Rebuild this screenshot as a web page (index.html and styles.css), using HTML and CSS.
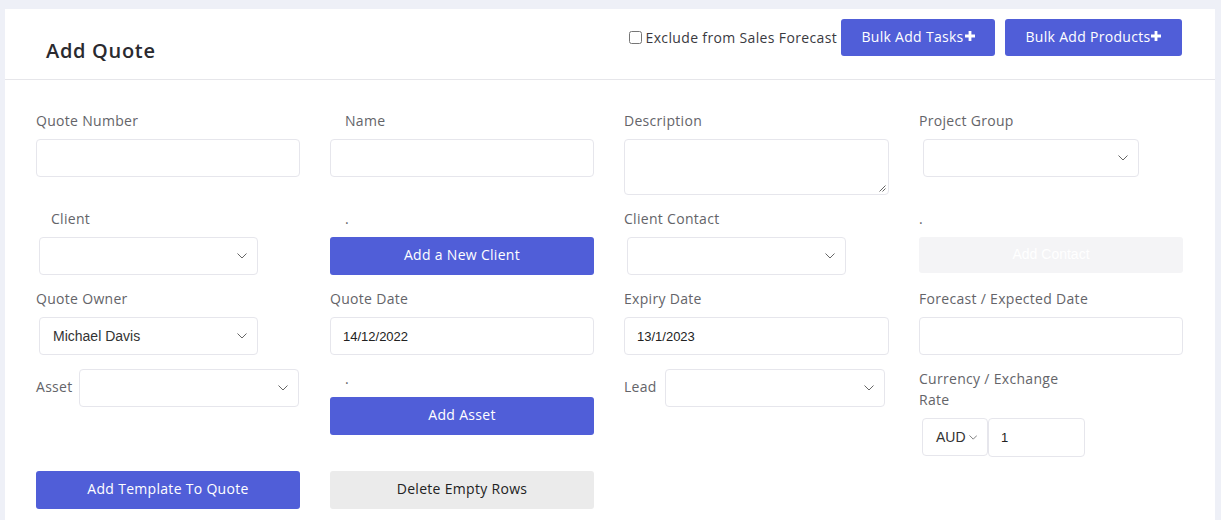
FILE: index.html
```html
<!DOCTYPE html>
<html lang="en">
<head>
<meta charset="utf-8">
<title>Add Quote</title>
<link rel="stylesheet" href="styles.css">
</head>
<body>
<div class="card">
  <div class="card-header">
    <h1 class="title">Add Quote</h1>
    <div class="header-actions">
      <label class="check"><input type="checkbox" class="checkbox">Exclude from Sales Forecast</label>
      <button class="btn btn-primary btn-bulk">Bulk Add Tasks<svg class="plus" viewBox="0 0 10 10" width="10" height="10"><path d="M3.6 0h2.8v3.6H10v2.8H6.4V10H3.6V6.4H0V3.6h3.6z" fill="#fff"/></svg></button>
      <button class="btn btn-primary btn-bulk">Bulk Add Products<svg class="plus" viewBox="0 0 10 10" width="10" height="10"><path d="M3.6 0h2.8v3.6H10v2.8H6.4V10H3.6V6.4H0V3.6h3.6z" fill="#fff"/></svg></button>
    </div>
  </div>
  <div class="card-body">
    <div class="form-grid">
      <!-- row 1 -->
      <div class="field">
        <div class="lbl">Quote Number</div>
        <div class="ctl input"></div>
      </div>
      <div class="field">
        <div class="lbl indent">Name</div>
        <div class="ctl input"></div>
      </div>
      <div class="field">
        <div class="lbl">Description</div>
        <div class="ctl textarea"><svg class="grip" viewBox="0 0 8 8" width="8" height="8"><path d="M7.5 1.5 1.5 7.5M7.5 4.5 4.5 7.5" stroke="#666" stroke-width="1"/></svg></div>
      </div>
      <div class="field">
        <div class="lbl">Project Group</div>
        <div class="ctl select sel-pg"><span></span><svg class="chev" viewBox="0 0 10 6" width="10" height="6"><path d="M.5.5 5 5 9.5.5" fill="none" stroke="#666" stroke-width="1"/></svg></div>
      </div>
      <!-- row 2 -->
      <div class="field">
        <div class="lbl indent">Client</div>
        <div class="ctl select sel-sm"><span></span><svg class="chev" viewBox="0 0 10 6" width="10" height="6"><path d="M.5.5 5 5 9.5.5" fill="none" stroke="#666" stroke-width="1"/></svg></div>
      </div>
      <div class="field">
        <div class="lbl indent">.</div>
        <button class="btn btn-primary btn-block">Add a New Client</button>
      </div>
      <div class="field">
        <div class="lbl">Client Contact</div>
        <div class="ctl select sel-sm"><span></span><svg class="chev" viewBox="0 0 10 6" width="10" height="6"><path d="M.5.5 5 5 9.5.5" fill="none" stroke="#666" stroke-width="1"/></svg></div>
      </div>
      <div class="field">
        <div class="lbl">.</div>
        <button class="btn btn-disabled btn-block">Add Contact</button>
      </div>
      <!-- row 3 -->
      <div class="field">
        <div class="lbl">Quote Owner</div>
        <div class="ctl select sel-sm"><span>Michael Davis</span><svg class="chev" viewBox="0 0 10 6" width="10" height="6"><path d="M.5.5 5 5 9.5.5" fill="none" stroke="#666" stroke-width="1"/></svg></div>
      </div>
      <div class="field">
        <div class="lbl">Quote Date</div>
        <div class="ctl input"><span class="val">14/12/2022</span></div>
      </div>
      <div class="field">
        <div class="lbl">Expiry Date</div>
        <div class="ctl input"><span class="val">13/1/2023</span></div>
      </div>
      <div class="field">
        <div class="lbl">Forecast / Expected Date</div>
        <div class="ctl input"></div>
      </div>
      <!-- row 4 -->
      <div class="field inline">
        <div class="lbl">Asset</div>
        <div class="ctl select sel-inline"><span></span><svg class="chev" viewBox="0 0 10 6" width="10" height="6"><path d="M.5.5 5 5 9.5.5" fill="none" stroke="#666" stroke-width="1"/></svg></div>
      </div>
      <div class="field">
        <div class="lbl indent">.</div>
        <button class="btn btn-primary btn-block">Add Asset</button>
      </div>
      <div class="field inline">
        <div class="lbl lbl-lead">Lead</div>
        <div class="ctl select sel-inline"><span></span><svg class="chev" viewBox="0 0 10 6" width="10" height="6"><path d="M.5.5 5 5 9.5.5" fill="none" stroke="#666" stroke-width="1"/></svg></div>
      </div>
      <div class="field">
        <div class="lbl narrow">Currency / Exchange Rate</div>
        <div class="currency">
          <div class="ctl select sel-cur"><span>AUD</span><svg class="chev" viewBox="0 0 10 6" width="9" height="5"><path d="M.5.5 5 5 9.5.5" fill="none" stroke="#666" stroke-width="1"/></svg></div>
          <div class="ctl input rate"><span class="val">1</span></div>
        </div>
      </div>
      <!-- row 5 -->
      <div class="field">
        <button class="btn btn-primary btn-block">Add Template To Quote</button>
      </div>
      <div class="field">
        <button class="btn btn-light btn-block">Delete Empty Rows</button>
      </div>
    </div>
  </div>
</div>
</body>
</html>
```

FILE: styles.css
```css
* { box-sizing: border-box; }

html, body {
  margin: 0;
  padding: 0;
}

body {
  background: #eef0f7;
  padding: 9px 6px 0 5px;
  font-family: "Open Sans", "Liberation Sans", sans-serif;
  height: 520px;
  overflow: hidden;
}

.card {
  background: #fff;
  height: 520px;
}

.card-header {
  height: 71px;
  border-bottom: 1px solid #e6e6ea;
  display: flex;
  justify-content: space-between;
  align-items: flex-start;
  padding: 10px 33px 0 41px;
}

.title {
  margin: 19px 0 0 0;
  font-size: 20px;
  line-height: 26px;
  font-weight: 600;
  letter-spacing: 0.7px;
  color: #2a2a2f;
}

.header-actions {
  display: flex;
  align-items: center;
  gap: 10px;
}

.check {
  display: flex;
  align-items: center;
  font-size: 14px;
  letter-spacing: 0.35px;
  color: #3a3a3f;
  margin-right: -6px;
}

.checkbox {
  width: 13px;
  height: 13px;
  margin: 0 4px 0 0;
}

.btn {
  font-family: "Open Sans", "Liberation Sans", sans-serif;
  font-size: 14px;
  letter-spacing: 0.3px;
  height: 38px;
  border: none;
  border-radius: 3px;
  padding: 0 0 3px 0;
  display: flex;
  align-items: center;
  justify-content: center;
  cursor: pointer;
}

.btn-primary {
  background: #505ed8;
  color: #fff;
}

.btn-bulk {
  height: 37px;
  padding: 0 12px 2px 12px;
}

.btn-bulk:first-of-type { width: 154px; }
.btn-bulk:last-of-type { width: 177px; }

.plus {
  margin-left: 1px;
  margin-top: -2px;
}

.btn-block {
  width: 264px;
}

.btn-disabled {
  background: #f4f4f6;
  color: #fff;
  font-family: "Liberation Sans", sans-serif;
  letter-spacing: 0;
  height: 36px;
}

.btn-light {
  background: #ebebeb;
  color: #222;
}

.card-body {
  padding: 31px 0 0 31px;
}

.form-grid {
  display: grid;
  grid-template-columns: 264px 264px 265px 264px;
  column-gap: 30px;
  row-gap: 14px;
  align-items: start;
}

.field {
  display: flex;
  flex-direction: column;
}

.lbl {
  font-size: 14px;
  line-height: 19px;
  letter-spacing: 0.3px;
  color: #646469;
  margin-bottom: 9px;
  white-space: nowrap;
}

.lbl.indent { padding-left: 15px; }

.lbl.narrow {
  white-space: normal;
  width: 160px;
  line-height: 21px;
  margin-top: -1px;
  margin-bottom: 8px;
}

.ctl {
  border: 1px solid #e6e6ec;
  border-radius: 4px;
  background: #fff;
  height: 38px;
}

.input {
  display: flex;
  align-items: center;
  padding-left: 12px;
}

.val {
  font-family: "Liberation Sans", Arial, sans-serif;
  font-size: 13px;
  color: #222;
}

.textarea {
  height: 56px;
  display: flex;
  justify-content: flex-end;
  align-items: flex-end;
  padding: 0 2px 2px 0;
}

.select {
  display: flex;
  align-items: center;
  justify-content: space-between;
  padding: 0 10px 0 13px;
  font-family: "Liberation Sans", Arial, sans-serif;
  font-size: 14px;
  color: #333;
}

.sel-sm {
  width: 219px;
  margin-left: 3px;
}

.sel-pg {
  width: 216px;
  margin-left: 4px;
}

.field.inline {
  flex-direction: row;
  align-items: center;
}

.field.inline .lbl {
  margin: -4px 6px 0 0;
}

.field.inline .lbl-lead {
  margin-right: 8px;
}

.sel-inline {
  width: 220px;
}

.currency {
  display: flex;
  margin-left: 3px;
}

.sel-cur {
  width: 66px;
  height: 38px;
  padding: 0 10px 0 13px;
  justify-content: flex-start;
  gap: 3px;
}

.rate {
  width: 97px;
  height: 39px;
}
```
